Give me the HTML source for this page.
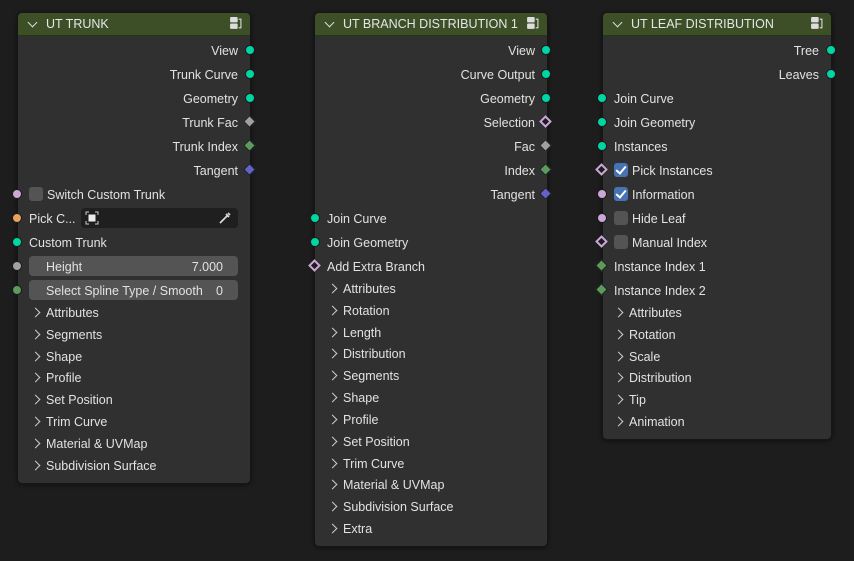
<!DOCTYPE html><html><head><meta charset="utf-8"><style>
body{margin:0;width:854px;height:561px;background:#1d1d1d;font-family:"Liberation Sans",sans-serif;font-size:12.5px;color:#e2e2e2;position:relative;overflow:hidden}
.n{position:absolute;top:12px;background:#303030;border:1px solid #161616;border-radius:5px;box-shadow:0 1px 4px rgba(0,0,0,.5)}
.h{position:absolute;left:0;right:0;top:0;height:22px;background:#3c4f27;border-radius:4px 4px 0 0;border-bottom:1px solid #283618;color:#e6e6e6;font-size:12.5px;line-height:22px}
.h .t{position:absolute;left:28px}
.h .c{position:absolute;left:11px;top:6px;width:6px;height:6px;border-right:1.5px solid #ddd;border-bottom:1.5px solid #ddd;transform:rotate(45deg)}
.h .i{position:absolute;right:8px;top:4px;width:13px;height:13px}
.r{position:absolute;height:16px;line-height:16px;white-space:nowrap;transform:translateY(1px)}
.ro{text-align:right}
.s{position:absolute;width:8px;height:8px;border-radius:50%;border:1px solid #1a1a1a;box-sizing:content-box}
.d{position:absolute;width:7px;height:7px;transform:translate(-1px,-1px) rotate(45deg);border:1px solid #1a1a1a}
.dp{background:#1d1d1d;border:2px solid #cca6d6;width:5px;height:5px;transform:translate(-1px,-1px) rotate(45deg)}
.p{position:absolute;height:16px;line-height:16px;transform:translateY(1px)}
.p:before{content:"";position:absolute;left:-14px;top:4px;width:6px;height:6px;border-right:1.4px solid #ccc;border-top:1.4px solid #ccc;transform:rotate(45deg)}
.cb{position:absolute;width:14px;height:14px;border-radius:3px;background:#545454}
.cb.on{background:#4772b3}
.cb.on:after{content:"";position:absolute;left:4px;top:1px;width:4px;height:8px;border-right:2px solid #fff;border-bottom:2px solid #fff;transform:rotate(40deg)}
.f{position:absolute;height:20px;background:#545454;border-radius:4px;line-height:20px}
</style></head><body>
<!-- Node 1 -->
<div class="n" style="left:17px;width:232px;height:470px">
<div class="h"><span class="c"></span><span class="t">UT TRUNK</span><svg class="i" viewBox="0 0 12 12"><rect x="1" y="0" width="7" height="5" rx="1" fill="#ddd"/><rect x="1" y="6" width="7" height="5" rx="1" fill="#ddd"/><path d="M9 2h2v8h-2" stroke="#ddd" fill="none"/></svg></div>
</div>
<div class="r ro" style="left:30px;width:208px;top:42px">View</div>
<div class="r ro" style="left:30px;width:208px;top:66px">Trunk Curve</div>
<div class="r ro" style="left:30px;width:208px;top:90px">Geometry</div>
<div class="r ro" style="left:30px;width:208px;top:114px">Trunk Fac</div>
<div class="r ro" style="left:30px;width:208px;top:138px">Trunk Index</div>
<div class="r ro" style="left:30px;width:208px;top:162px">Tangent</div>
<div class="s" style="left:245px;top:45px;background:#00d6a3"></div>
<div class="s" style="left:245px;top:69px;background:#00d6a3"></div>
<div class="s" style="left:245px;top:93px;background:#00d6a3"></div>
<div class="d" style="left:246px;top:118px;background:#a1a1a1"></div>
<div class="d" style="left:246px;top:142px;background:#5d9a5d"></div>
<div class="d" style="left:246px;top:166px;background:#6363c7"></div>
<div class="s" style="left:12px;top:189px;background:#cca6d6"></div>
<div class="cb" style="left:29px;top:187px"></div>
<div class="r" style="left:47px;top:186px">Switch Custom Trunk</div>
<div class="s" style="left:12px;top:213px;background:#e8a15f"></div>
<div class="r" style="left:29px;top:210px">Pick C...</div>
<div class="f" style="left:81px;top:208px;width:157px;background:#1f1f1f"><svg style="position:absolute;left:4px;top:3px" width="14" height="14" viewBox="0 0 14 14"><path d="M1 4V1h3M10 1h3v3M13 10v3h-3M4 13H1v-3" stroke="#ccc" fill="none"/><rect x="3.5" y="3.5" width="7" height="7" fill="#eee"/></svg><svg style="position:absolute;right:6px;top:3px" width="14" height="14" viewBox="0 0 14 14"><path d="M2 12l7-7M8 3l3 3M10 2l2 2" stroke="#ddd" stroke-width="1.6" fill="none"/></svg></div>
<div class="s" style="left:12px;top:237px;background:#00d6a3"></div>
<div class="r" style="left:29px;top:234px">Custom Trunk</div>
<div class="s" style="left:12px;top:261px;background:#a1a1a1"></div>
<div class="f" style="left:29px;top:256px;width:209px"><span style="position:absolute;left:17px;top:1px">Height</span><span style="position:absolute;right:15px;top:1px">7.000</span></div>
<div class="s" style="left:12px;top:285px;background:#5d9a5d"></div>
<div class="f" style="left:29px;top:280px;width:209px"><span style="position:absolute;left:17px;top:1px">Select Spline Type / Smooth</span><span style="position:absolute;right:15px;top:1px">0</span></div>
<div class="p" style="left:46px;top:304px">Attributes</div>
<div class="p" style="left:46px;top:326px">Segments</div>
<div class="p" style="left:46px;top:348px">Shape</div>
<div class="p" style="left:46px;top:369px">Profile</div>
<div class="p" style="left:46px;top:391px">Set Position</div>
<div class="p" style="left:46px;top:413px">Trim Curve</div>
<div class="p" style="left:46px;top:435px">Material &amp; UVMap</div>
<div class="p" style="left:46px;top:457px">Subdivision Surface</div>

<!-- Node 2 -->
<div class="n" style="left:314px;width:232px;height:533px">
<div class="h"><span class="c"></span><span class="t">UT BRANCH DISTRIBUTION 1</span><svg class="i" viewBox="0 0 12 12"><rect x="1" y="0" width="7" height="5" rx="1" fill="#ddd"/><rect x="1" y="6" width="7" height="5" rx="1" fill="#ddd"/><path d="M9 2h2v8h-2" stroke="#ddd" fill="none"/></svg></div>
</div>
<div class="r ro" style="left:327px;width:208px;top:42px">View</div>
<div class="r ro" style="left:327px;width:208px;top:66px">Curve Output</div>
<div class="r ro" style="left:327px;width:208px;top:90px">Geometry</div>
<div class="r ro" style="left:327px;width:208px;top:114px">Selection</div>
<div class="r ro" style="left:327px;width:208px;top:138px">Fac</div>
<div class="r ro" style="left:327px;width:208px;top:162px">Index</div>
<div class="r ro" style="left:327px;width:208px;top:186px">Tangent</div>
<div class="s" style="left:541px;top:45px;background:#00d6a3"></div>
<div class="s" style="left:541px;top:69px;background:#00d6a3"></div>
<div class="s" style="left:541px;top:93px;background:#00d6a3"></div>
<div class="d dp" style="left:542px;top:118px"></div>
<div class="d" style="left:542px;top:142px;background:#a1a1a1"></div>
<div class="d" style="left:542px;top:166px;background:#5d9a5d"></div>
<div class="d" style="left:542px;top:190px;background:#6363c7"></div>
<div class="s" style="left:310px;top:213px;background:#00d6a3"></div>
<div class="r" style="left:327px;top:210px">Join Curve</div>
<div class="s" style="left:310px;top:237px;background:#00d6a3"></div>
<div class="r" style="left:327px;top:234px">Join Geometry</div>
<div class="d dp" style="left:311px;top:262px"></div>
<div class="r" style="left:327px;top:258px">Add Extra Branch</div>
<div class="p" style="left:343px;top:280px">Attributes</div>
<div class="p" style="left:343px;top:302px">Rotation</div>
<div class="p" style="left:343px;top:324px">Length</div>
<div class="p" style="left:343px;top:345px">Distribution</div>
<div class="p" style="left:343px;top:367px">Segments</div>
<div class="p" style="left:343px;top:389px">Shape</div>
<div class="p" style="left:343px;top:411px">Profile</div>
<div class="p" style="left:343px;top:433px">Set Position</div>
<div class="p" style="left:343px;top:455px">Trim Curve</div>
<div class="p" style="left:343px;top:476px">Material &amp; UVMap</div>
<div class="p" style="left:343px;top:498px">Subdivision Surface</div>
<div class="p" style="left:343px;top:520px">Extra</div>

<!-- Node 3 -->
<div class="n" style="left:602px;width:228px;height:426px">
<div class="h"><span class="c"></span><span class="t">UT LEAF DISTRIBUTION</span><svg class="i" viewBox="0 0 12 12"><rect x="1" y="0" width="7" height="5" rx="1" fill="#ddd"/><rect x="1" y="6" width="7" height="5" rx="1" fill="#ddd"/><path d="M9 2h2v8h-2" stroke="#ddd" fill="none"/></svg></div>
</div>
<div class="r ro" style="left:615px;width:204px;top:42px">Tree</div>
<div class="r ro" style="left:615px;width:204px;top:66px">Leaves</div>
<div class="s" style="left:826px;top:45px;background:#00d6a3"></div>
<div class="s" style="left:826px;top:69px;background:#00d6a3"></div>
<div class="s" style="left:597px;top:93px;background:#00d6a3"></div>
<div class="r" style="left:614px;top:90px">Join Curve</div>
<div class="s" style="left:597px;top:117px;background:#00d6a3"></div>
<div class="r" style="left:614px;top:114px">Join Geometry</div>
<div class="s" style="left:597px;top:141px;background:#00d6a3"></div>
<div class="r" style="left:614px;top:138px">Instances</div>
<div class="d dp" style="left:598px;top:166px"></div>
<div class="cb on" style="left:614px;top:163px"></div>
<div class="r" style="left:632px;top:162px">Pick Instances</div>
<div class="s" style="left:597px;top:189px;background:#cca6d6"></div>
<div class="cb on" style="left:614px;top:187px"></div>
<div class="r" style="left:632px;top:186px">Information</div>
<div class="s" style="left:597px;top:213px;background:#cca6d6"></div>
<div class="cb" style="left:614px;top:211px"></div>
<div class="r" style="left:632px;top:210px">Hide Leaf</div>
<div class="d dp" style="left:598px;top:238px"></div>
<div class="cb" style="left:614px;top:235px"></div>
<div class="r" style="left:632px;top:234px">Manual Index</div>
<div class="d" style="left:598px;top:262px;background:#5d9a5d"></div>
<div class="r" style="left:614px;top:258px">Instance Index 1</div>
<div class="d" style="left:598px;top:286px;background:#5d9a5d"></div>
<div class="r" style="left:614px;top:282px">Instance Index 2</div>
<div class="p" style="left:629px;top:304px">Attributes</div>
<div class="p" style="left:629px;top:326px">Rotation</div>
<div class="p" style="left:629px;top:348px">Scale</div>
<div class="p" style="left:629px;top:369px">Distribution</div>
<div class="p" style="left:629px;top:391px">Tip</div>
<div class="p" style="left:629px;top:413px">Animation</div>
</body></html>
